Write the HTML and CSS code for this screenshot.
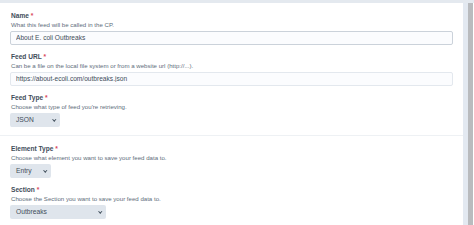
FILE: index.html
```html
<!DOCTYPE html>
<html lang="en">
<head>
    <meta charset="UTF-8">
    <title>Feed settings</title>
    <link rel="stylesheet" href="styles.css">
</head>
<body>
    <div class="page">
        <div class="pane">
            <div class="field">
                <div class="label">Name <span class="req">*</span></div>
                <div class="instr">What this feed will be called in the CP.</div>
                <input class="text focused" type="text" value="About E. coli Outbreaks">
            </div>
            <div class="field">
                <div class="label">Feed URL <span class="req">*</span></div>
                <div class="instr">Can be a file on the local file system or from a website url (http://...).</div>
                <input class="text" type="text" value="https://about-ecoli.com/outbreaks.json">
            </div>
            <div class="field">
                <div class="label">Feed Type <span class="req">*</span></div>
                <div class="instr">Choose what type of feed you're retrieving.</div>
                <div class="select w-json">JSON <span class="caret"></span></div>
            </div>
            <hr class="divider">
            <div class="field">
                <div class="label">Element Type <span class="req">*</span></div>
                <div class="instr">Choose what element you want to save your feed data to.</div>
                <div class="select w-entry">Entry <span class="caret"></span></div>
            </div>
            <div class="field">
                <div class="label">Section <span class="req">*</span></div>
                <div class="instr">Choose the Section you want to save your feed data to.</div>
                <div class="select w-section">Outbreaks <span class="caret"></span></div>
            </div>
        </div>
        <div class="gutter"></div>
        <div class="scrollbar"></div>
        <div class="edge"></div>
    </div>
</body>
</html>
```

FILE: styles.css
```css
body {
    margin: 0;
    background: #e4e9ef;
    font-family: "Liberation Sans", Arial, sans-serif;
    color: #3f4d5a;
}
.page {
    display: flex;
    height: 225px;
    padding-top: 3px;
    box-sizing: border-box;
}
.pane {
    flex: 1;
    background: #fff;
    padding: 7.7px 10px 0 10px;
    overflow: hidden;
}
.gutter {
    width: 5px;
    background: #e3e9f1;
}
.scrollbar {
    width: 5px;
    background: #b9bbbe;
}
.edge {
    width: 1px;
    background: #fff;
}
.field {
    margin-bottom: 7.3px;
}
.label {
    font-size: 6.6px;
    font-weight: 700;
    line-height: 9px;
    padding-left: 1px;
}
.req {
    color: #d9455a;
}
.instr {
    font-size: 6.1px;
    line-height: 9px;
    color: #606d7b;
    padding-left: 1px;
    margin-bottom: 2px;
}
.text {
    display: block;
    box-sizing: border-box;
    width: 100%;
    height: 14px;
    margin: 0;
    padding: 0 5px;
    border: 1px solid #e3e8ee;
    border-radius: 2px;
    background: #fbfcfe;
    font-family: inherit;
    font-size: 6.6px;
    color: #3f4d5a;
}
.text.focused {
    border-color: #cbd2da;
}
.select {
    position: relative;
    box-sizing: border-box;
    height: 14px;
    line-height: 14px;
    padding-left: 6px;
    border-radius: 2px;
    background: #dfe5ec;
    font-size: 6.7px;
}
.w-json { width: 50px; }
.w-entry { width: 41px; }
.w-section { width: 96px; }
.caret {
    position: absolute;
    right: 5px;
    top: 5px;
    width: 1.5px;
    height: 1.5px;
    border-right: 1px solid #3f4d5a;
    border-bottom: 1px solid #3f4d5a;
    transform: rotate(45deg);
}
.divider {
    border: 0;
    border-top: 1px solid #eef1f4;
    margin: 0 -10px 8px -10px;
}
```
